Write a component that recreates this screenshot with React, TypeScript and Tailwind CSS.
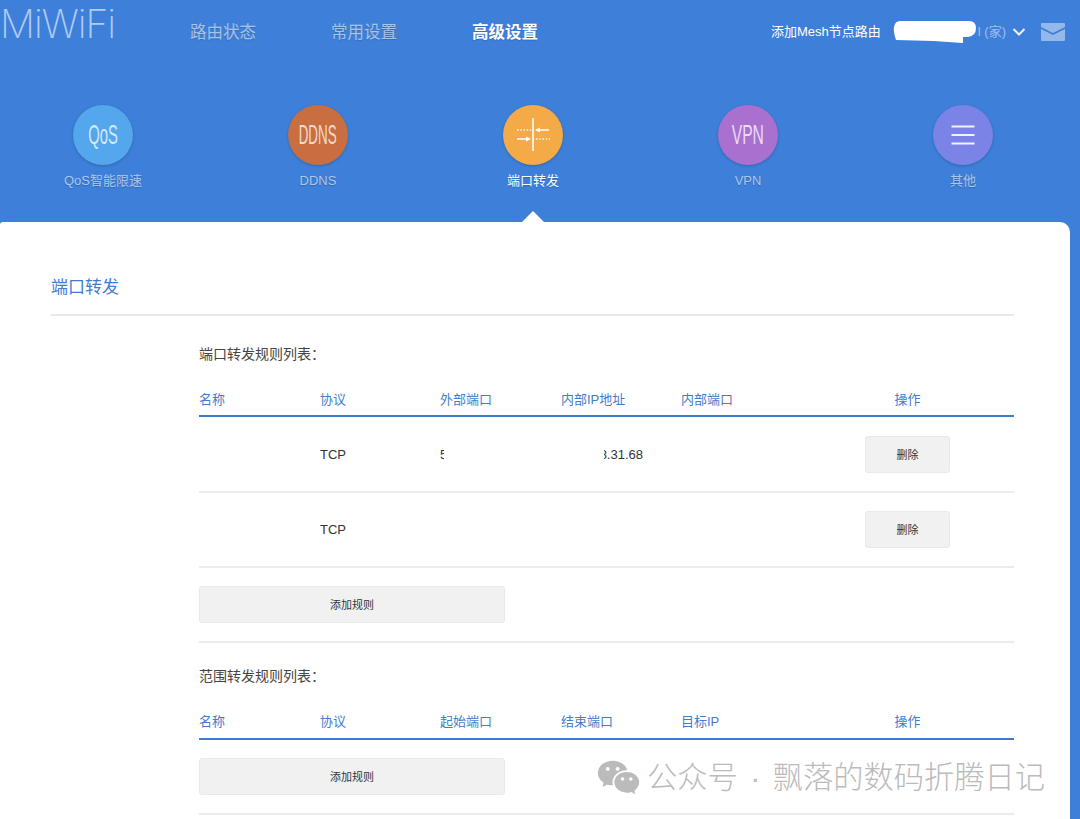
import { RiWechatFill } from 'react-icons/ri';

const RULE_COLS = 'grid grid-cols-[121px_120px_121px_120px_121px_1fr]';

const NAV_ITEMS = [
  { label: '路由状态', active: false },
  { label: '常用设置', active: false },
  { label: '高级设置', active: true },
];

function PortIcon() {
  return (
    <svg viewBox="0 0 60 60" className="w-[60px] h-[60px]" fill="none" stroke="white">
      <path d="M30 13V46" strokeWidth="1.6" />
      <path d="M14 25H28M33 34H47" strokeWidth="1.6" strokeDasharray="1.6 1.6" strokeOpacity="0.9" />
      <path d="M46 25H35M14 34H25" strokeWidth="1.6" />
      <path d="M32 25L37 22.5V27.5Z M28 34L23 31.5V36.5Z" fill="white" stroke="none" />
    </svg>
  );
}

function MoreIcon() {
  return (
    <svg viewBox="0 0 60 60" className="w-[60px] h-[60px]" fill="none" stroke="white" strokeWidth="1.8" opacity="0.9">
      <path d="M18.5 21.5H41.5M18.5 30H41.5M18.5 38.5H41.5" />
    </svg>
  );
}

function CircleText({ text, squeeze }: { text: string; squeeze: string }) {
  return (
    <span className={`text-[28px] leading-none text-white/75 whitespace-nowrap ${squeeze}`}>{text}</span>
  );
}

function MenuItem({ color, label, active, children }: { color: string; label: string; active?: boolean; children: React.ReactNode }) {
  return (
    <div className="relative w-[215px] shrink-0 h-[117px] flex flex-col items-center">
      <div className={`w-[60px] h-[60px] rounded-full flex items-center justify-center shadow-[0_1px_3px_rgba(0,0,0,0.2)] ${color}`}>
        {children}
      </div>
      <div className={`mt-[8px] text-[13px] leading-[16px] [text-shadow:0_1px_1px_rgba(0,0,0,0.2)] ${active ? 'text-white' : 'text-white/60'}`}>
        {label}
      </div>
      {active && (
        <div className="absolute bottom-0 left-1/2 -ml-[11px] w-0 h-0 border-x-[11px] border-x-transparent border-b-[11px] border-b-white" />
      )}
    </div>
  );
}

function TableHead({ cols, spacing }: { cols: string[]; spacing: string }) {
  return (
    <div className={`${RULE_COLS} mt-[26px] border-b-2 border-[#3d7ad0] text-[13px] leading-[20px] text-[#3f7ccd] ${spacing}`}>
      {cols.map(c => (
        <div key={c}>{c}</div>
      ))}
      <div className="text-center pr-[1px]">操作</div>
    </div>
  );
}

function GrayButton({ className, label }: { className: string; label: string }) {
  return (
    <button className={`h-[37px] pt-[1px] bg-[#f1f1f1] border border-[#e9e9e9] rounded-[3px] text-[11px] text-[#333] ${className}`}>
      {label}
    </button>
  );
}

function RuleRow({ children }: { children?: React.ReactNode }) {
  return (
    <div className={`${RULE_COLS} h-[75px] items-center border-b-2 border-[#ececec] text-[13px] text-[#333]`}>
      <div />
      <div>TCP</div>
      {children ?? (
        <>
          <div />
          <div />
        </>
      )}
      <div />
      <div className="flex justify-center pr-[1px]">
        <GrayButton className="w-[85px]" label="删除" />
      </div>
    </div>
  );
}

export default function App() {
  return (
    <div className="relative w-[1080px] h-[819px] overflow-hidden bg-[#3d7fd9] font-['Liberation_Sans','Noto_Sans_CJK_SC',sans-serif]">
      <header className="h-[64px] flex items-center">
        <div className="w-[190px] h-full">
          <span className="block text-[39px] leading-[48px] font-['Inter',sans-serif] font-extralight tracking-[-1px] text-white/60">MiWiFi</span>
        </div>
        <nav className="flex gap-[75px]">
          {NAV_ITEMS.map(item => (
            <span
              key={item.label}
              className={`text-[16.5px] leading-[24px] [text-shadow:0_1px_1px_rgba(0,0,0,0.15)] ${item.active ? 'text-white font-bold' : 'text-white/55'}`}
            >
              {item.label}
            </span>
          ))}
        </nav>
        <div className="ml-auto pr-[15px] flex items-center">
          <span className="text-[13px] text-white">添加Mesh节点路由</span>
          <svg viewBox="0 0 83 22" className="ml-[12px] mr-[2px] w-[83px] h-[22px]" fill="white">
            <path d="M7 0H76Q83 0 83 7Q83 15 75 16H70V22L40 20L3 19Q0 10 1 6Q2 0 7 0Z" />
          </svg>
          <span className="text-[13px] text-white/50 whitespace-nowrap">l (家)</span>
          <svg viewBox="0 0 14 10" className="ml-[6px] w-[14px] h-[10px]" fill="none" stroke="white" strokeWidth="2" opacity="0.9">
            <path d="M1.5 2L7 7.5L12.5 2" />
          </svg>
          <svg viewBox="0 0 24 18" className="ml-[15px] w-[24px] h-[18px]">
            <path d="M1 0H23Q24 0 24 1V4L12 10L0 4V1Q0 0 1 0Z" fill="white" fillOpacity="0.45" />
            <path d="M0 6L12 12L24 6V17Q24 18 23 18H1Q0 18 0 17Z" fill="white" fillOpacity="0.45" />
          </svg>
        </div>
      </header>

      <div className="h-[158px] pt-[41px] pr-[14px] flex justify-center">
        <MenuItem color="bg-[#54a7ed]" label="QoS智能限速"><CircleText text="QoS" squeeze="scale-x-[0.53]" /></MenuItem>
        <MenuItem color="bg-[#c96e40]" label="DDNS"><CircleText text="DDNS" squeeze="scale-x-[0.48]" /></MenuItem>
        <MenuItem color="bg-[#f4aa47]" label="端口转发" active><PortIcon /></MenuItem>
        <MenuItem color="bg-[#aa70cf]" label="VPN"><CircleText text="VPN" squeeze="scale-x-[0.56]" /></MenuItem>
        <MenuItem color="bg-[#7b84e6]" label="其他"><MoreIcon /></MenuItem>
      </div>

      <main className="w-[1070px] h-[700px] bg-white rounded-tl-[3px] rounded-tr-[10px] pt-[53px] pl-[51px] pr-[56px]">
        <h2 className="text-[17px] leading-[24px] pb-[15px] border-b-2 border-[#e9e9e9] text-[#3f7ccd]">
          <span className="relative top-[1px]">端口转发</span>
        </h2>

        <section className="ml-[148px]">
          <div className="mt-[28px] text-[14px] leading-[20px] text-[#444]">端口转发规则列表：</div>
          <TableHead cols={['名称', '协议', '外部端口', '内部IP地址', '内部端口']} spacing="pb-[5px]" />
          <div className="pt-[1px]">
            <RuleRow>
              <div className="w-[4px] overflow-hidden">5</div>
              <div className="pl-[43px]">
                <div className="w-[39px] flex justify-end overflow-hidden">
                  <span className="shrink-0">8.31.68</span>
                </div>
              </div>
            </RuleRow>
            <RuleRow />
          </div>
          <div className="pt-[18px] pb-[18px] border-b-2 border-[#ececec] flex">
            <GrayButton className="w-[306px]" label="添加规则" />
          </div>

          <div className="mt-[23px] text-[14px] leading-[20px] text-[#444]">范围转发规则列表：</div>
          <TableHead cols={['名称', '协议', '起始端口', '结束端口', '目标IP']} spacing="pb-[6px]" />
          <div className="pt-[18px] pb-[18px] border-b-2 border-[#ececec] flex">
            <GrayButton className="w-[306px]" label="添加规则" />
          </div>
        </section>
      </main>

      <div className="absolute left-[596px] top-[755px] flex items-center text-[#bbbbbb] font-light">
        <RiWechatFill className="w-[45px] h-[45px]" />
        <span className="ml-[6px] text-[30.25px] leading-[40px] whitespace-nowrap">公众号</span>
        <span className="w-[35px] text-center text-[30.25px] leading-[40px]">·</span>
        <span className="text-[30.25px] leading-[40px] whitespace-nowrap">飘落的数码折腾日记</span>
      </div>
    </div>
  );
}
